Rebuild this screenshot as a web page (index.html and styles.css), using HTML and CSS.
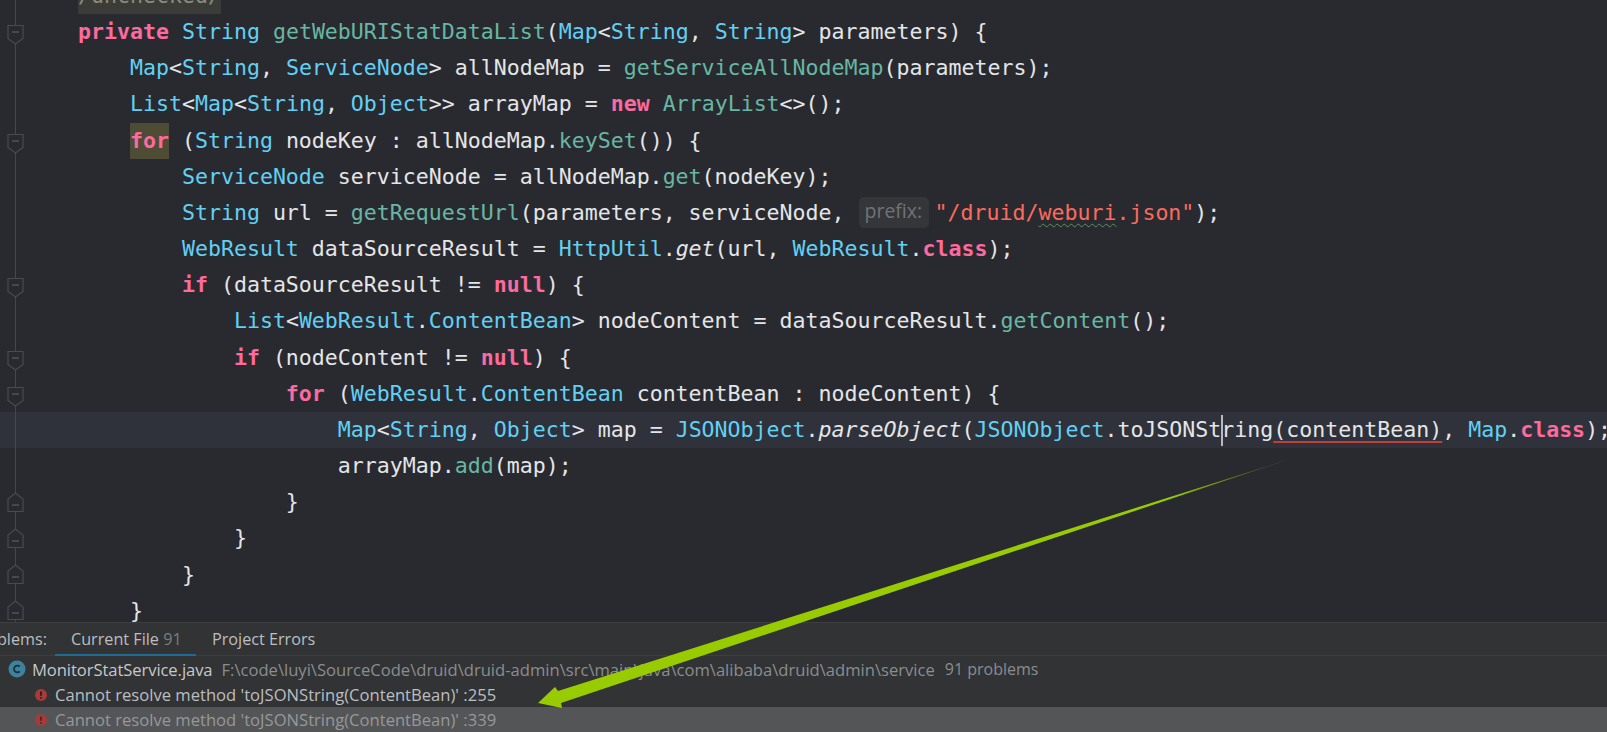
FILE: index.html
```html
<!DOCTYPE html>
<html lang="en">
<head>
<meta charset="utf-8">
<title>MonitorStatService.java</title>
<link rel="stylesheet" href="styles.css">
</head>
<body>
<svg class="defs" width="0" height="0" aria-hidden="true">
  <symbol id="fold-down" viewBox="0 0 17 21"><path d="M1 1.5H16V14.5L8.5 20L1 14.5Z" fill="#292a30" stroke="#4a4b4f" stroke-width="1.2"/><path d="M5 8H12" stroke="#5d5e62" stroke-width="1.2"/></symbol>
  <symbol id="fold-up" viewBox="0 0 17 21"><path d="M1 19.5H16V7L8.5 1L1 7Z" fill="#292a30" stroke="#4a4b4f" stroke-width="1.2"/><path d="M5 13H12" stroke="#5d5e62" stroke-width="1.2"/></symbol>
</svg>
<main class="ide">
  <section class="editor">
    <div class="code">
      <div class="line"><span class="gutter"></span><code><span class="supp">/unchecked/</span></code></div>
      <div class="line"><span class="gutter"><svg class="fold down"><use href="#fold-down"/></svg></span><code><b class="k">private</b> <i class="t">String</i> <i class="m">getWebURIStatDataList</i>(<i class="t">Map</i>&lt;<i class="t">String</i>, <i class="t">String</i>&gt; parameters) {</code></div>
      <div class="line"><span class="gutter"></span><code>    <i class="t">Map</i>&lt;<i class="t">String</i>, <i class="t">ServiceNode</i>&gt; allNodeMap = <i class="m">getServiceAllNodeMap</i>(parameters);</code></div>
      <div class="line"><span class="gutter"></span><code>    <i class="t">List</i>&lt;<i class="t">Map</i>&lt;<i class="t">String</i>, <i class="t">Object</i>&gt;&gt; arrayMap = <b class="k">new</b> <i class="m">ArrayList</i>&lt;&gt;();</code></div>
      <div class="line"><span class="gutter"><svg class="fold down"><use href="#fold-down"/></svg></span><code>    <b class="k hit">for</b> (<i class="t">String</i> nodeKey : allNodeMap.<i class="m">keySet</i>()) {</code></div>
      <div class="line"><span class="gutter"></span><code>        <i class="t">ServiceNode</i> serviceNode = allNodeMap.<i class="m">get</i>(nodeKey);</code></div>
      <div class="line"><span class="gutter"></span><code>        <i class="t">String</i> url = <i class="m">getRequestUrl</i>(parameters, serviceNode, <span class="hint">prefix:</span><i class="s">"/druid/<span class="typo">weburi</span>.json"</i>);</code></div>
      <div class="line"><span class="gutter"></span><code>        <i class="t">WebResult</i> dataSourceResult = <i class="t">HttpUtil</i>.<em>get</em>(url, <i class="t">WebResult</i>.<b class="k">class</b>);</code></div>
      <div class="line"><span class="gutter"><svg class="fold down"><use href="#fold-down"/></svg></span><code>        <b class="k">if</b> (dataSourceResult != <b class="k">null</b>) {</code></div>
      <div class="line"><span class="gutter"></span><code>            <i class="t">List</i>&lt;<i class="t">WebResult</i>.<i class="t">ContentBean</i>&gt; nodeContent = dataSourceResult.<i class="m">getContent</i>();</code></div>
      <div class="line"><span class="gutter"><svg class="fold down"><use href="#fold-down"/></svg></span><code>            <b class="k">if</b> (nodeContent != <b class="k">null</b>) {</code></div>
      <div class="line"><span class="gutter"><svg class="fold down"><use href="#fold-down"/></svg></span><code>                <b class="k">for</b> (<i class="t">WebResult</i>.<i class="t">ContentBean</i> contentBean : nodeContent) {</code></div>
      <div class="line current"><span class="gutter"></span><code>                    <i class="t">Map</i>&lt;<i class="t">String</i>, <i class="t">Object</i>&gt; map = <i class="t">JSONObject</i>.<em>parseObject</em>(<i class="t">JSONObject</i>.<span class="unres">toJSONSt<span class="caret"></span>ring</span><span class="err">(contentBean)</span>, <i class="t">Map</i>.<b class="k">class</b>);</code></div>
      <div class="line"><span class="gutter"></span><code>                    arrayMap.<i class="m">add</i>(map);</code></div>
      <div class="line"><span class="gutter"><svg class="fold"><use href="#fold-up"/></svg></span><code>                }</code></div>
      <div class="line"><span class="gutter"><svg class="fold"><use href="#fold-up"/></svg></span><code>            }</code></div>
      <div class="line"><span class="gutter"><svg class="fold"><use href="#fold-up"/></svg></span><code>        }</code></div>
      <div class="line"><span class="gutter"><svg class="fold"><use href="#fold-up"/></svg></span><code>    }</code></div>
    </div>
  </section>
  <section class="problems">
    <nav class="tabs">
      <span class="tabs-label">Problems:</span>
      <span class="tab active">Current File <span class="count">91</span></span>
      <span class="tab">Project Errors</span>
    </nav>
    <div class="tree">
      <div class="file-row">
        <svg class="class-icon" viewBox="0 0 18 18"><circle cx="9" cy="9" r="8.5" fill="#3d83a0"/><path d="M11.8 6.6A3.4 3.4 0 1 0 11.8 11.4" fill="none" stroke="#1f3038" stroke-width="1.8"/></svg>
        <span class="file-name">MonitorStatService.java</span>
        <span class="file-path">F:\code\luyi\SourceCode\druid\druid-admin\src\main\java\com\alibaba\druid\admin\service</span>
        <span class="file-count">91 problems</span>
      </div>
      <div class="problem-row">
        <svg class="err-icon" viewBox="0 0 12 12"><circle cx="6" cy="6" r="6" fill="#a83a38"/><path d="M6 2.4V6.8M6 8.2V9.8" stroke="#2d2021" stroke-width="1.9"/></svg>
        <span class="msg">Cannot resolve method 'toJSONString(ContentBean)' :255</span>
      </div>
      <div class="problem-row selected">
        <svg class="err-icon" viewBox="0 0 12 12"><circle cx="6" cy="6" r="6" fill="#a83a38"/><path d="M6 2.4V6.8M6 8.2V9.8" stroke="#3d3031" stroke-width="1.9"/></svg>
        <span class="msg">Cannot resolve method 'toJSONString(ContentBean)' :339</span>
      </div>
    </div>
  </section>
  <svg class="arrow" viewBox="0 0 1607 732" aria-hidden="true">
    <defs>
      <linearGradient id="fade" gradientUnits="userSpaceOnUse" x1="1290" y1="459" x2="538" y2="703">
        <stop offset="0" stop-color="#99cc00" stop-opacity="0.1"/>
        <stop offset="0.16" stop-color="#99cc00"/>
        <stop offset="1" stop-color="#99cc00"/>
      </linearGradient>
    </defs>
    <polygon fill="url(#fade)" points="1290,459 558,691 555,687 538,703 562,708 561,703"/>
  </svg>
</main>
</body>
</html>
```
FILE: styles.css
```css
* { box-sizing: border-box; }
html, body { margin: 0; height: 100%; background: #292a30; }
.defs { position: absolute; }
.ide { position: relative; display: flex; flex-direction: column; width: 1607px; height: 732px; overflow: hidden; }
.editor { height: 622px; flex: none; overflow: hidden; background: #292a30; }
.code { margin-top: -22.2px; font: 21.58px/36.18px "DejaVu Sans Mono", "Liberation Mono", monospace; color: #e4e5e7; }
.line { display: flex; height: 36.18px; }
.line.current { background: #2f323b; }
.gutter { flex: none; width: 78px; display: flex; align-items: center; padding-left: 7px; background: linear-gradient(#46474b, #46474b) 15px 0 / 1px 100% no-repeat; }
.fold { width: 17px; height: 21px; }
.fold.down { margin-top: 5px; }
code { font: inherit; white-space: pre; }
code i, code b { font-style: normal; font-weight: normal; }
code em { font-style: italic; }
.k { color: #fc6a9e; font-weight: bold !important; }
.t { color: #62d0f3; }
.m { color: #67b7a4; }
.s { color: #fc6a5d; }
.supp { display: inline-block; background: #3b3c37; color: #8c8c7c; }
.hit { display: inline-block; background: #4f4c36; }
.hint { display: inline-block; width: 70px; height: 31px; margin: 0 6px 0 1px; padding-left: 6px; border-radius: 5px; background: #35363a; color: #727376; font: 19.5px/28px "Open Sans", "Noto Sans", sans-serif; vertical-align: 2px; }
.typo { text-decoration: underline wavy #5f8f63 1px; text-underline-offset: 3px; }
.unres { position: relative; }
.caret { position: relative; display: inline-block; width: 0; height: 0; }
.caret::after { content: ""; position: absolute; left: 0; bottom: -9px; width: 2px; height: 31px; background: #b9babb; }
.err { text-decoration: underline solid #c13f3b 2px; text-underline-offset: 4px; text-decoration-skip-ink: none; }

.problems { flex: 1; display: flex; flex-direction: column; background: #313335; border-top: 1px solid #3c3e40; font-family: "Open Sans", "Noto Sans", sans-serif; font-size: 16.6px; color: #bcbec0; }
.tabs { flex: none; height: 33px; display: flex; align-items: center; border-bottom: 1px solid #3c3e40; font-size: 16.2px; }
.tabs-label { margin-left: -31px; width: 78px; white-space: nowrap; flex: none; text-align: right; margin-right: 1px; }
.tab { height: 33px; line-height: 33px; padding: 0 15px; white-space: nowrap; flex: none; }
.tab.active { width: 141px; padding-left: 16px; margin-left: 7px; border-bottom: 2px solid #1e6b94; }
.tab.active + .tab { padding-left: 16px; }
.count { color: #7c7e80; }
.tree { flex: 1; display: flex; flex-direction: column; }
.file-row { height: 26px; display: flex; align-items: center; gap: 10px; padding-left: 8px; white-space: nowrap; }
.class-icon { width: 18px; height: 18px; flex: none; margin-right: -4px; }
.file-name { color: #c6c8ca; letter-spacing: -0.08px; margin-right: -1px; }
.file-path { color: #8b8d8f; }
.file-count { color: #8b8d8f; font-size: 16px; }
.problem-row { height: 25px; display: flex; align-items: center; padding-left: 35px; gap: 8px; white-space: nowrap; }
.err-icon { width: 12px; height: 12px; flex: none; }
.problem-row.selected { background: #545557; color: #97989a; }
.arrow { position: absolute; inset: 0; width: 1607px; height: 732px; pointer-events: none; }
```
